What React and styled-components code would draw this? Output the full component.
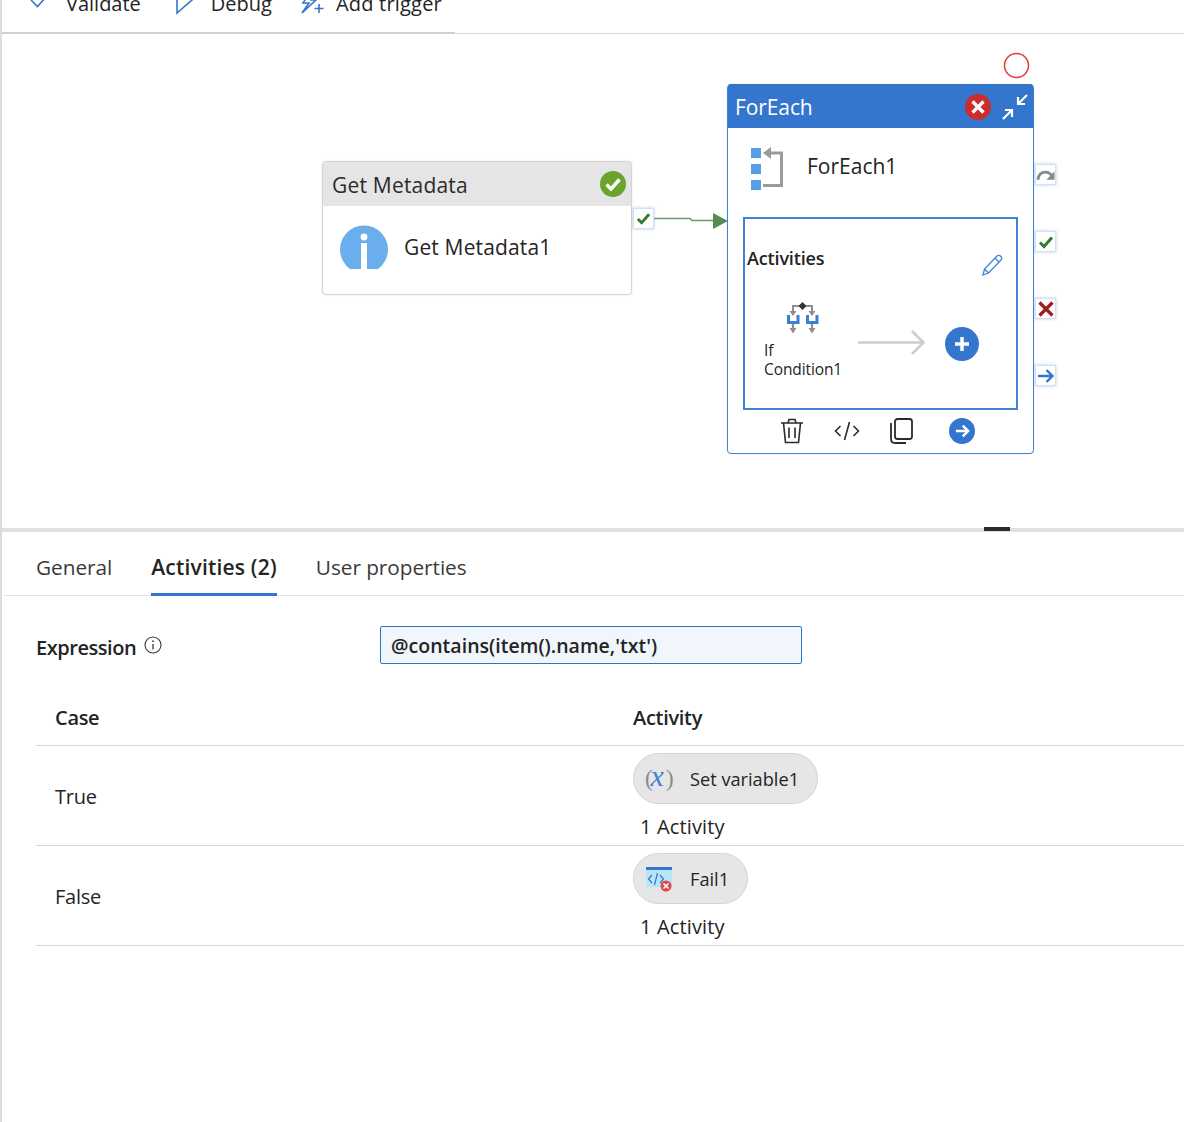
import React from 'react';
import styled, { createGlobalStyle } from 'styled-components';

const GlobalStyle = createGlobalStyle`
  html, body { margin: 0; padding: 0; background: #fff; }
  body { font-family: "Open Sans", "Noto Sans", "Liberation Sans", sans-serif; color: #242424; }
`;

const BLUE = '#3476cd';

const Page = styled.div`
  width: 1184px;
  height: 1122px;
  box-sizing: border-box;
  border-left: 2px solid #dcdcdc;
  overflow: hidden;
  display: flex;
  flex-direction: column;
`;

const Toolbar = styled.div`
  position: relative;
  height: 34px;
  box-sizing: border-box;
  flex-shrink: 0;
  border-bottom: 1px solid #d8d8d8;
  display: flex;
  align-items: flex-end;
  padding: 0 0 17px 28px;
  &::after {
    content: '';
    position: absolute;
    left: 0;
    bottom: -1px;
    width: 453px;
    height: 2px;
    background: #cfcfcf;
  }
`;

const ToolButton = styled.div`
  display: flex;
  align-items: center;
  gap: ${p => p.$gap}px;
  margin-right: ${p => p.$right}px;
  font-size: 20px;
  line-height: 24px;
  height: 24px;
  letter-spacing: ${p => p.$spacing || 0}px;
`;

const Canvas = styled.div`
  position: relative;
  height: 494px;
  flex-shrink: 0;
`;

const Splitter = styled.div`
  position: relative;
  height: 4px;
  flex-shrink: 0;
  background: #e0e0e0;
  &::after {
    content: '';
    position: absolute;
    left: 982px;
    top: -1px;
    width: 26px;
    height: 4px;
    background: #2b2b2b;
  }
`;

const Node = styled.div`
  position: absolute;
  left: ${p => p.$x}px;
  top: ${p => p.$y}px;
  width: ${p => p.$w}px;
  height: ${p => p.$h}px;
  box-sizing: border-box;
  border: 1px solid ${p => p.$border};
  border-radius: 4px;
  background: #fff;
  display: flex;
  flex-direction: column;
  box-shadow: 0 0 2px rgba(0, 0, 0, 0.12);
`;

const NodeHeader = styled.div`
  height: 44px;
  flex-shrink: 0;
  box-sizing: border-box;
  background: ${p => p.$bg};
  color: ${p => p.$color};
  display: flex;
  align-items: center;
  margin-top: ${p => (p.$flush ? '-1px' : '0')};
  padding: ${p => (p.$flush ? '2px' : '0')} 5px 0 ${p => p.$left}px;
  font-size: 21px;
  letter-spacing: ${p => p.$spacing}px;
  border-radius: 3px 3px 0 0;
`;

const HeaderTitle = styled.span`
  flex: 1;
  padding-top: ${p => p.$shift || 0}px;
`;

const NodeBody = styled.div`
  display: flex;
  align-items: center;
  height: ${p => p.$h}px;
  padding-left: ${p => p.$left}px;
  margin-bottom: ${p => p.$bottom || 0}px;
  gap: ${p => p.$gap}px;
  font-size: 21px;
  letter-spacing: ${p => p.$spacing || 0}px;
  flex-shrink: 0;
`;

const ActivitiesBox = styled.div`
  margin: 0 15px;
  height: 193px;
  box-sizing: border-box;
  border: 2px solid #3f82d6;
  flex-shrink: 0;
  display: flex;
  flex-direction: column;
`;

const BoxHead = styled.div`
  display: flex;
  align-items: flex-start;
  justify-content: space-between;
  padding: 27px 13px 0 2px;
  height: 83px;
  box-sizing: border-box;
  font-size: 18px;
  font-weight: 600;
  line-height: 25px;
  letter-spacing: -0.15px;
  flex-shrink: 0;
`;

const InnerRow = styled.div`
  display: flex;
  align-items: flex-start;
  padding-left: 19px;
`;

const InnerActivity = styled.div`
  width: 94px;
  font-size: 15.5px;
  line-height: 19px;
  display: flex;
  flex-direction: column;
  letter-spacing: -0.1px;
`;

const InnerIcon = styled.div`
  display: flex;
  justify-content: center;
  width: 78px;
  margin-bottom: 7px;
`;

const Drawing = styled.svg`
  flex-shrink: 0;
  margin-top: ${p => p.$top || 0}px;
  margin-left: ${p => p.$left || 0}px;
`;

const NodeFooter = styled.div`
  height: 41px;
  display: flex;
  align-items: center;
  position: relative;
`;

const FooterSlot = styled.div`
  position: absolute;
  left: ${p => p.$x}px;
  display: flex;
`;

const SideHandles = styled.div`
  position: absolute;
  left: 1033px;
  top: 197px;
  display: flex;
  flex-direction: column;
  gap: 46px;
`;

const Handle = styled.div`
  position: ${p => (p.$free ? 'absolute' : 'static')};
  left: ${p => p.$x}px;
  top: ${p => p.$y}px;
  width: 21px;
  height: 21px;
  box-sizing: border-box;
  background: #fff;
  border: 1px solid #d2e0f2;
  box-shadow: 0 0 3px rgba(52, 118, 205, 0.35);
  display: flex;
  align-items: center;
  justify-content: center;
`;

const FreeSvg = styled.svg`
  position: absolute;
  left: ${p => p.$x}px;
  top: ${p => p.$y}px;
`;

const Tabs = styled.div`
  height: 64px;
  box-sizing: border-box;
  flex-shrink: 0;
  border-bottom: 1px solid #e2e2e2;
  display: flex;
  gap: 39px;
  margin-left: 2px;
  padding-left: 32px;
`;

const Tab = styled.div`
  height: 64px;
  box-sizing: border-box;
  display: flex;
  align-items: center;
  font-size: ${p => (p.$active ? 21 : 20.8)}px;
  font-weight: ${p => (p.$active ? 600 : 400)};
  color: ${p => (p.$active ? '#242424' : '#3a3a3a')};
  border-bottom: 3px solid ${p => (p.$active ? BLUE : 'transparent')};
  letter-spacing: ${p => (p.$active ? '0.2px' : '-0.05px')};
  padding-top: 9px;
`;

const FormRow = styled.div`
  display: flex;
  align-items: center;
  height: 38px;
  margin-top: 30px;
  padding-left: 34px;
  flex-shrink: 0;
`;

const FormLabel = styled.div`
  width: 344px;
  display: flex;
  align-items: center;
  gap: 8px;
  font-size: 20px;
  font-weight: 600;
  letter-spacing: -0.45px;
`;

const LabelText = styled.span`
  padding-top: 4px;
`;

const ExpressionInput = styled.div`
  width: 422px;
  height: 38px;
  box-sizing: border-box;
  border: 1px solid #2f74cc;
  border-radius: 2px;
  background: #f0f6fb;
  display: flex;
  align-items: center;
  padding-left: 10px;
  font-size: 19.5px;
  font-weight: 600;
  letter-spacing: 0.03px;
`;

const Table = styled.div`
  margin: 28px 0 0 34px;
`;

const TableRow = styled.div`
  display: grid;
  grid-template-columns: 597px 1fr;
  height: ${p => p.$h}px;
  border-bottom: 1px solid #d6d6d6;
  box-sizing: border-box;
`;

const CaseCell = styled.div`
  padding: ${p => (p.$head ? '0 0 2px' : '2px 0 0')};
  padding-left: ${p => (p.$flat ? 0 : 19)}px;
  font-size: 20px;
  font-weight: ${p => (p.$head ? 600 : 400)};
  display: flex;
  align-items: center;
  letter-spacing: ${p => (p.$head ? '-0.3px' : '-0.25px')};
`;

const ActivityCell = styled.div`
  padding-top: 7px;
  display: flex;
  flex-direction: column;
  align-items: flex-start;
`;

const Pill = styled.div`
  height: 51px;
  box-sizing: border-box;
  border: 1px solid #d4d4d4;
  border-radius: 26px;
  background: #e6e6e6;
  display: flex;
  align-items: center;
  padding: 0 18px 0 11px;
  gap: 17px;
  font-size: 18.2px;
`;

const ActivityCount = styled.div`
  margin: 9px 0 0 7px;
  font-size: 20px;
  line-height: 28px;
  letter-spacing: 0.15px;
`;

const CheckMark = ({ color = '#2e7d32', size = 16 }) => (
  <svg width={size} height={size} viewBox="0 0 16 16">
    <path d="M2 8.5 L6 12.5 L14 3.5" fill="none" stroke={color} strokeWidth="3" />
  </svg>
);

const StatusDot = ({ bg, kind }) => (
  <svg width="26" height="26" viewBox="0 0 26 26">
    <circle cx="13" cy="13" r="13" fill={bg} />
    {kind === 'ok' ? (
      <path d="M6.5 13.5 L11 18 L19.5 8.5" fill="none" stroke="#fff" strokeWidth="3.4" />
    ) : (
      <path d="M7.5 7.5 L18.5 18.5 M18.5 7.5 L7.5 18.5" fill="none" stroke="#fff" strokeWidth="3.4" />
    )}
  </svg>
);

export default function App() {
  return (
    <>
      <GlobalStyle />
      <Page>
        <Toolbar>
          <ToolButton $gap={18} $right={34}>
            <svg width="18" height="14" viewBox="0 0 18 14">
              <path d="M1 3 L7.5 9.5 L17 -1" fill="none" stroke={BLUE} strokeWidth="1.6" />
            </svg>
            Validate
          </ToolButton>
          <ToolButton $gap={17} $right={28}>
            <svg width="19" height="22" viewBox="0 0 19 22">
              <path d="M2 1 V20 L17 7 L9 0" fill="none" stroke={BLUE} strokeWidth="1.6" />
            </svg>
            Debug
          </ToolButton>
          <ToolButton $gap={12} $spacing={0.2}>
            <svg width="24" height="22" viewBox="0 0 24 22">
              <path d="M9 1 L3 10 H9 L2 20 L16 7 H10 M14 1 L11 5" fill="none" stroke={BLUE} strokeWidth="1.6" />
              <path d="M19 11 V20 M14.5 15.5 H23.5" fill="none" stroke={BLUE} strokeWidth="1.6" />
            </svg>
            Add trigger
          </ToolButton>
        </Toolbar>

        <Canvas>
          <Node $x={320} $y={127} $w={310} $h={134} $border="#d4d4d4">
            <NodeHeader $bg="#e5e5e5" $color="#2b2b2b" $left={9} $spacing={0.2}>
              <HeaderTitle $shift={2}>Get Metadata</HeaderTitle>
              <StatusDot bg="#6aa42d" kind="ok" />
            </NodeHeader>
            <NodeBody $h={81} $left={17} $gap={16} $spacing={0.15}>
              <svg width="48" height="48" viewBox="0 0 48 48">
                <path d="M10 46 A24 24 0 1 1 38 46 Z" fill="#6aaeee" />
                <circle cx="24" cy="14" r="3.4" fill="#fff" />
                <rect x="21" y="20" width="6" height="26" fill="#fff" />
              </svg>
              Get Metadata1
            </NodeBody>
          </Node>

          <Handle $free $x={631} $y={174}>
            <CheckMark size={15} />
          </Handle>
          <FreeSvg $x={652} $y={176} width="76" height="22" viewBox="0 0 76 22">
            <path d="M0 8.5 H36 L38 10.5 H60" fill="none" stroke="#6a9a6a" strokeWidth="1.4" />
            <path d="M59 3 L74 11 L59 19 Z" fill="#558b55" />
          </FreeSvg>

          <FreeSvg $x={1001} $y={18} width="27" height="27" viewBox="0 0 27 27">
            <circle cx="13.5" cy="13.5" r="12" fill="none" stroke="#e53935" strokeWidth="1.5" />
          </FreeSvg>

          <Node $x={725} $y={50} $w={307} $h={370} $border="#3f82d6">
            <NodeHeader $bg={BLUE} $color="#fff" $left={7} $spacing={-0.1} $flush>
              <HeaderTitle>ForEach</HeaderTitle>
              <StatusDot bg="#cc2c2c" kind="x" />
              <Drawing $left={11} width="26" height="26" viewBox="0 0 26 26">
                <path d="M25 1 L16 10 M16 3 V10 H23 M1 25 L10 16 M3 16 H10 V23" fill="none" stroke="#fff" strokeWidth="2.2" />
              </Drawing>
            </NodeHeader>
            <NodeBody $h={76} $bottom={13} $left={22} $gap={23}>
              <Drawing $top={6} width="34" height="44" viewBox="0 0 34 44">
                <rect x="1" y="1" width="10" height="10" fill="#55a0e4" />
                <rect x="1" y="17" width="10" height="10" fill="#55a0e4" />
                <rect x="1" y="33" width="10" height="10" fill="#55a0e4" />
                <path d="M20 6 H31.5 V38.5 H13" fill="none" stroke="#9a9a9a" strokeWidth="3" />
                <path d="M21 0 V12 L13 6 Z" fill="#9a9a9a" />
              </Drawing>
              ForEach1
            </NodeBody>
            <ActivitiesBox>
              <BoxHead>
                Activities
                <Drawing $top={8} width="21" height="22" viewBox="0 0 21 22">
                  <path d="M1 21 L2.5 15 L15 2 Q17 0.5 19 2.5 Q20.5 4.5 19 6 L6.5 19 Z M13 4 L17.5 8.5 M2.5 15 L6.5 19" fill="none" stroke="#3f82d6" strokeWidth="1.3" />
                </Drawing>
              </BoxHead>
              <InnerRow>
                <InnerActivity>
                  <InnerIcon>
                    <svg width="32" height="32" viewBox="0 0 32 32">
                      <path d="M6 13 V4 H25 V13" fill="none" stroke="#8f8f8f" strokeWidth="2" />
                      <path d="M15.5 0 L19.5 4 L15.5 8 L11.5 4 Z" fill="#333" />
                      <path d="M2.5 9 L6 14 L9.5 9 Z M21.5 9 L25 14 L28.5 9 Z" fill="#8f8f8f" />
                      <path d="M1.5 13 V20.5 H11 V13 M20.5 13 V20.5 H30 V13" fill="none" stroke="#3a7fd5" strokeWidth="3" />
                      <path d="M6 22 V28 M25 22 V28" stroke="#8f8f8f" strokeWidth="2.2" />
                      <path d="M2.5 26 L6 31.5 L9.5 26 Z M21.5 26 L25 31.5 L28.5 26 Z" fill="#8f8f8f" />
                    </svg>
                  </InnerIcon>
                  <span>If</span>
                  <span>Condition1</span>
                </InnerActivity>
                <Drawing $top={27} width="68" height="26" viewBox="0 0 68 26">
                  <path d="M0 13.5 H65 M54 2 L65.5 13.5 L54 25" fill="none" stroke="#cdcdcd" strokeWidth="2.6" />
                </Drawing>
                <Drawing $top={25} $left={19} width="34" height="34" viewBox="0 0 34 34">
                  <circle cx="17" cy="17" r="17" fill={BLUE} />
                  <path d="M17 10 V24 M10 17 H24" stroke="#fff" strokeWidth="3.4" fill="none" />
                </Drawing>
              </InnerRow>
            </ActivitiesBox>
            <NodeFooter>
              <FooterSlot $x={52}>
                <svg width="24" height="26" viewBox="0 0 24 26">
                  <path d="M1 5 H23 M8 5 L9 1.5 H15 L16 5 M3.5 5 L5.5 24.5 H18.5 L20.5 5 M9 9.5 V20 M15 9.5 V20" fill="none" stroke="#2b2b2b" strokeWidth="1.6" />
                </svg>
              </FooterSlot>
              <FooterSlot $x={106}>
                <svg width="26" height="20" viewBox="0 0 26 20">
                  <path d="M6.5 5 L1.5 10 L6.5 15 M19.5 5 L24.5 10 L19.5 15 M15.5 1 L10.5 19" fill="none" stroke="#2b2b2b" strokeWidth="1.6" />
                </svg>
              </FooterSlot>
              <FooterSlot $x={161}>
                <svg width="24" height="26" viewBox="0 0 24 26">
                  <rect x="6" y="1" width="17" height="20" rx="2.5" fill="none" stroke="#2b2b2b" strokeWidth="1.8" />
                  <path d="M2 5 V21 Q2 25 6 25 H17" fill="none" stroke="#2b2b2b" strokeWidth="1.8" />
                </svg>
              </FooterSlot>
              <FooterSlot $x={221}>
                <svg width="26" height="26" viewBox="0 0 34 34">
                  <circle cx="17" cy="17" r="17" fill={BLUE} />
                  <path d="M9 17 H25 M18 10 L25 17 L18 24" stroke="#fff" strokeWidth="3.2" fill="none" />
                </svg>
              </FooterSlot>
            </NodeFooter>
          </Node>

          <Handle $free $x={1033} $y={130}>
            <svg width="20" height="14" viewBox="0 0 20 14">
              <path d="M2 12 Q3 4 10 4 Q14 4 17 8" fill="none" stroke="#8a8a8a" strokeWidth="3" />
              <path d="M19.5 3 V12 H11 Z" fill="#8a8a8a" />
            </svg>
          </Handle>
          <SideHandles>
            <Handle>
              <CheckMark size={16} />
            </Handle>
            <Handle>
              <svg width="16" height="16" viewBox="0 0 16 16">
                <path d="M1.5 1.5 L14.5 14.5 M14.5 1.5 L1.5 14.5" stroke="#a11d1d" strokeWidth="3.2" />
              </svg>
            </Handle>
            <Handle>
              <svg width="16" height="14" viewBox="0 0 16 14">
                <path d="M0 7 H14 M8.5 1 L14.5 7 L8.5 13" fill="none" stroke={BLUE} strokeWidth="2.4" />
              </svg>
            </Handle>
          </SideHandles>
        </Canvas>

        <Splitter />

        <Tabs>
          <Tab>General</Tab>
          <Tab $active>Activities (2)</Tab>
          <Tab>User properties</Tab>
        </Tabs>

        <FormRow>
          <FormLabel>
            <LabelText>Expression</LabelText>
            <svg width="18" height="18" viewBox="0 0 18 18">
              <circle cx="9" cy="9" r="8" fill="none" stroke="#3a3a3a" strokeWidth="1.1" />
              <path d="M9 8 V13.5" stroke="#3a3a3a" strokeWidth="1.3" />
              <circle cx="9" cy="5.2" r="0.9" fill="#3a3a3a" />
            </svg>
          </FormLabel>
          <ExpressionInput>@contains(item().name,'txt')</ExpressionInput>
        </FormRow>

        <Table>
          <TableRow $h={54}>
            <CaseCell $head>Case</CaseCell>
            <CaseCell $head $flat>Activity</CaseCell>
          </TableRow>
          <TableRow $h={100}>
            <CaseCell>True</CaseCell>
            <ActivityCell>
              <Pill>
                <svg width="28" height="26" viewBox="0 0 28 26">
                  <text x="0" y="20" fontSize="23" fontFamily="Liberation Serif" fill="#8a8a8a">(</text>
                  <text x="5.5" y="20" fontSize="30" fontStyle="italic" fontFamily="Liberation Serif" fill="#3f82d6">x</text>
                  <text x="21" y="20" fontSize="23" fontFamily="Liberation Serif" fill="#8a8a8a">)</text>
                </svg>
                Set variable1
              </Pill>
              <ActivityCount>1 Activity</ActivityCount>
            </ActivityCell>
          </TableRow>
          <TableRow $h={100}>
            <CaseCell>False</CaseCell>
            <ActivityCell>
              <Pill>
                <svg width="28" height="26" viewBox="0 0 28 26">
                  <rect x="1" y="3" width="26" height="18" fill="#b7e6fb" />
                  <rect x="1" y="1" width="26" height="3" fill={BLUE} />
                  <path d="M7 9 L3.5 13 L7 17 M15 9 L18.5 13 L15 17 M12.5 7 L9.5 19" fill="none" stroke={BLUE} strokeWidth="1.2" />
                  <circle cx="21" cy="20" r="5.5" fill="#e04848" />
                  <path d="M18.5 17.5 L23.5 22.5 M23.5 17.5 L18.5 22.5" stroke="#fff" strokeWidth="1.6" />
                </svg>
                Fail1
              </Pill>
              <ActivityCount>1 Activity</ActivityCount>
            </ActivityCell>
          </TableRow>
        </Table>
      </Page>
    </>
  );
}
